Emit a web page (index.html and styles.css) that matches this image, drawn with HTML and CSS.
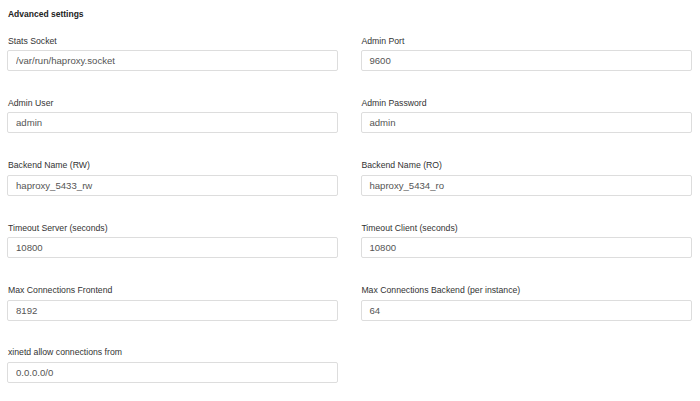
FILE: index.html
```html
<!DOCTYPE html>
<html>
<head>
<meta charset="utf-8">
<link rel="stylesheet" href="styles.css">
</head>
<body>
<div class="page">
  <h4 class="heading">Advanced settings</h4>
  <div class="grid">
    <div class="field"><label class="label">Stats Socket</label><input class="input" type="text" value="/var/run/haproxy.socket"></div>
    <div class="field"><label class="label">Admin Port</label><input class="input" type="text" value="9600"></div>
    <div class="field"><label class="label">Admin User</label><input class="input" type="text" value="admin"></div>
    <div class="field"><label class="label">Admin Password</label><input class="input" type="text" value="admin"></div>
    <div class="field"><label class="label">Backend Name (RW)</label><input class="input" type="text" value="haproxy_5433_rw"></div>
    <div class="field"><label class="label">Backend Name (RO)</label><input class="input" type="text" value="haproxy_5434_ro"></div>
    <div class="field"><label class="label">Timeout Server (seconds)</label><input class="input" type="text" value="10800"></div>
    <div class="field"><label class="label">Timeout Client (seconds)</label><input class="input" type="text" value="10800"></div>
    <div class="field"><label class="label">Max Connections Frontend</label><input class="input" type="text" value="8192"></div>
    <div class="field"><label class="label">Max Connections Backend (per instance)</label><input class="input" type="text" value="64"></div>
    <div class="field"><label class="label">xinetd allow connections from</label><input class="input" type="text" value="0.0.0.0/0"></div>
  </div>
</div>
</body>
</html>
```
FILE: styles.css
```css
html, body {
  margin: 0;
  padding: 0;
  background: #ffffff;
}
.page {
  padding: 8px 0 0 7.3px;
  font-family: "Liberation Sans", Arial, Helvetica, sans-serif;
  color: #333333;
}
.heading {
  margin: 0 0 14.5px 0.7px;
  font-size: 8.5px;
  line-height: 12px;
  font-weight: bold;
  color: #222222;
}
.grid {
  display: grid;
  grid-template-columns: 331px 331px;
  column-gap: 22.4px;
  row-gap: 25.9px;
}
.field {
  display: flex;
  flex-direction: column;
}
.label {
  display: block;
  font-size: 8.7px;
  line-height: 12px;
  margin: 0 0 3.5px 0.7px;
  color: #333333;
}
.input {
  box-sizing: border-box;
  width: 100%;
  height: 21px;
  margin: 0;
  padding: 0 7.7px;
  border: 1px solid #dddddd;
  border-radius: 2px;
  background: #ffffff;
  font-family: "Liberation Sans", Arial, Helvetica, sans-serif;
  font-size: 9.6px;
  color: #555555;
  outline: none;
}
```
